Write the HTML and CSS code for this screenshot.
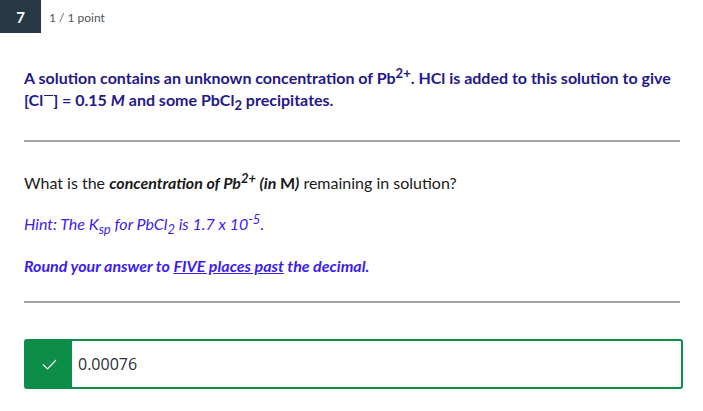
FILE: index.html
```html
<!DOCTYPE html>
<html>
<head>
<meta charset="utf-8">
<link rel="stylesheet" href="styles.css">
</head>
<body>
<div class="header">
  <div class="badge">7</div>
  <div class="points">1 / 1 point</div>
</div>
<div class="content">
  <p class="prompt">A solution contains an unknown concentration of Pb<sup>2+</sup>. HCl is added to this solution to give [Cl<span class="minus"></span>] = 0.15 <i>M</i> and some PbCl<sub>2</sub> precipitates.</p>
  <hr class="rule rule-1">
  <p class="question">What is the <b><i>concentration of Pb<sup>2+</sup> (in </i>M<i>)</i></b> remaining in solution?</p>
  <p class="hint"><i>Hint: The K<sub>sp</sub> for PbCl<sub>2</sub> is 1.7 x 10<sup>-5</sup>.</i></p>
  <p class="round"><b><i>Round your answer to <u>FIVE places past</u> the decimal.</i></b></p>
  <hr class="rule rule-2">
  <div class="answer">
    <div class="check">
      <svg width="15" height="11" viewBox="0 0 15 11"><path d="M1 5.5 L5.5 10 L14 1" fill="none" stroke="#fff" stroke-width="1.1"/></svg>
    </div>
    <div class="value">0.00076</div>
  </div>
</div>
</body>
</html>
```
FILE: styles.css
```css
body {
  margin: 0;
  font-family: Lato, "Liberation Sans", sans-serif;
  background: #fff;
  color: #1f1f1f;
}
.header {
  display: flex;
  align-items: center;
  height: 33px;
}
.badge {
  width: 41px;
  height: 33px;
  background: #263843;
  color: #fff;
  font-weight: bold;
  font-size: 15px;
  display: flex;
  align-items: center;
  justify-content: center;
}
.points {
  margin-left: 8px;
  font-size: 12px;
  color: #555;
  padding-top: 2px;
}
.content {
  padding: 0 23px 0 24px;
}
p {
  margin: 0;
  font-size: 16px;
  line-height: 22px;
}
sup, sub {
  line-height: 0;
  font-size: 13px;
}
.prompt {
  margin-top: 34px;
  font-weight: bold;
  color: #24188a;
}
.minus {
  display: inline-block;
  width: 9px;
  height: 11px;
  border-top: 1.5px solid #24188a;
  vertical-align: -1px;
  margin: 0 0 0 1px;
}
.rule {
  border: 0;
  height: 2px;
  background: #a3a3a3;
  margin: 0;
}
.rule-1 {
  margin-top: 29px;
}
.question {
  margin-top: 30px;
  color: #1a1a1a;
}
.hint {
  margin-top: 19px;
  color: #3b1df0;
}
.round {
  margin-top: 20px;
  color: #3b1df0;
}
.rule-2 {
  margin-top: 24px;
}
.answer {
  margin-top: 36px;
  margin-right: -3px;
  height: 50px;
  box-sizing: border-box;
  border: 2px solid #0c8d48;
  border-radius: 3px;
  display: flex;
  align-items: stretch;
}
.check {
  width: 46px;
  background: #0c8d48;
  display: flex;
  align-items: center;
  justify-content: center;
}
.value {
  display: flex;
  align-items: center;
  padding-left: 6px;
  font-family: "Open Sans", "Noto Sans", sans-serif;
  font-size: 16px;
  color: #2a2f36;
}
```
